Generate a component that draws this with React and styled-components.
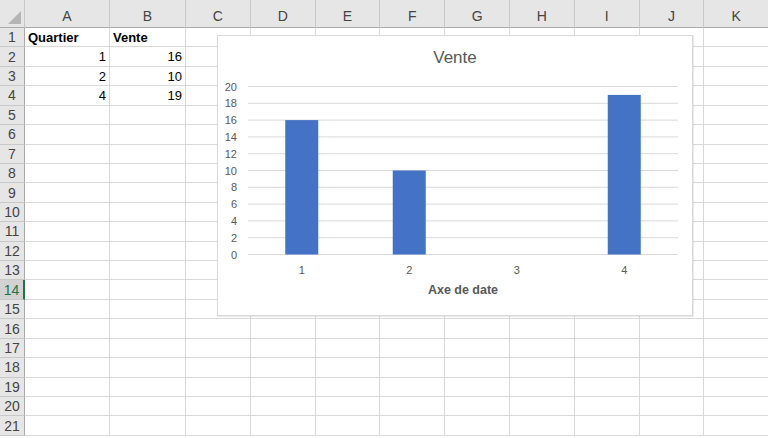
import React from 'react';
import styled, { createGlobalStyle } from 'styled-components';

const GlobalStyle = createGlobalStyle`
    html, body {
        margin: 0;
        padding: 0;
        background: #fff;
        overflow: hidden;
    }
    * { box-sizing: border-box; }
`;

const columns = ['A', 'B', 'C', 'D', 'E', 'F', 'G', 'H', 'I', 'J', 'K'];
const rows = Array.from({ length: 21 }, (_, i) => i + 1);
const cells = {
    '1A': { v: 'Quartier', bold: true },
    '1B': { v: 'Vente', bold: true },
    '2A': { v: 1 }, '2B': { v: 16 },
    '3A': { v: 2 }, '3B': { v: 10 },
    '4A': { v: 4 }, '4B': { v: 19 },
};
const sales = [16, 10, 0, 19];

const Sheet = styled.div`
    position: relative;
    width: 768px;
    height: 438px;
    overflow: hidden;
    display: grid;
    grid-template-columns: 25px 85px 76px repeat(9, 64.8px);
    grid-template-rows: 28px repeat(21, 19.43px);
    font-family: "Liberation Sans", Arial, sans-serif;
    background: #fff;
`;

const Corner = styled.div`
    position: relative;
    background: #e6e6e6;
    border-right: 1px solid #c8c8c8;
    border-bottom: 1px solid #ababab;
    &::after {
        content: '';
        position: absolute;
        right: 3px;
        bottom: 3px;
        border-left: 13px solid transparent;
        border-bottom: 13px solid #b5b5b5;
    }
`;

const ColHead = styled.div`
    display: flex;
    align-items: flex-end;
    justify-content: center;
    padding-bottom: 3px;
    background: #e6e6e6;
    border-right: 1px solid #c8c8c8;
    border-bottom: 1px solid #ababab;
    color: #444;
    font-size: 14px;
`;

const RowHead = styled.div`
    display: flex;
    align-items: center;
    justify-content: center;
    background: ${p => (p.$selected ? '#d2d2d2' : '#e6e6e6')};
    color: ${p => (p.$selected ? '#217346' : '#444')};
    border-bottom: 1px solid #c8c8c8;
    border-right: ${p => (p.$selected ? '2px solid #217346' : '1px solid #ababab')};
    font-size: 14px;
`;

const Cell = styled.div`
    display: flex;
    align-items: center;
    justify-content: ${p => (p.$right ? 'flex-end' : 'flex-start')};
    padding: 0 3px;
    border-right: 1px solid #d9d9d9;
    border-bottom: 1px solid #d9d9d9;
    color: #000;
    font-size: 13px;
    font-weight: ${p => (p.$bold ? 700 : 400)};
    white-space: nowrap;
`;

const Chart = styled.div`
    position: absolute;
    left: 217px;
    top: 35px;
    width: 476px;
    height: 281px;
    background: #fff;
    border: 1px solid #d9d9d9;
    box-shadow: 1px 1px 1px rgba(0, 0, 0, 0.08);
    display: flex;
    flex-direction: column;
    font-family: "Liberation Sans", Arial, sans-serif;
`;

const ChartTitle = styled.div`
    margin-top: 12px;
    height: 20px;
    line-height: 20px;
    text-align: center;
    font-size: 17px;
    color: #595959;
`;

const Plot = styled.svg`
    display: block;
    width: 474px;
    height: 212px;
`;

const AxisTitle = styled.div`
    margin-top: 2px;
    padding-left: 16px;
    height: 16px;
    line-height: 16px;
    text-align: center;
    font-size: 12.5px;
    font-weight: 700;
    color: #595959;
`;

const zeroY = 186.5;
const unit = 8.4;
const plotLeft = 30;
const plotRight = 460;
const band = (plotRight - plotLeft) / sales.length;

function ColumnChart() {
    const ticks = Array.from({ length: 11 }, (_, i) => i * 2);
    return (
        <Chart>
            <ChartTitle>Vente</ChartTitle>
            <Plot viewBox="0 0 474 212">
                {ticks.map(t => {
                    const y = zeroY - t * unit;
                    return (
                        <g key={t}>
                            <line x1={plotLeft} x2={plotRight} y1={y} y2={y} stroke="#d9d9d9" strokeWidth="1" />
                            <text x="19" y={y} textAnchor="end" dominantBaseline="central" fontSize="11" fill="#595959">{t}</text>
                        </g>
                    );
                })}
                {sales.map((v, i) => {
                    const cx = plotLeft + band * (i + 0.5);
                    return (
                        <g key={i}>
                            {v > 0 && <rect x={cx - 16.5} y={zeroY - v * unit} width="33" height={v * unit} fill="#4472c4" />}
                            <text x={cx} y="202" textAnchor="middle" dominantBaseline="central" fontSize="11" fill="#595959">{i + 1}</text>
                        </g>
                    );
                })}
            </Plot>
            <AxisTitle>Axe de date</AxisTitle>
        </Chart>
    );
}

export default function App() {
    return (
        <>
            <GlobalStyle />
            <Sheet>
                <Corner />
                {columns.map(c => <ColHead key={c}>{c}</ColHead>)}
                {rows.map(r => (
                    <React.Fragment key={r}>
                        <RowHead $selected={r === 14}>{r}</RowHead>
                        {columns.map(c => {
                            const cell = cells[`${r}${c}`];
                            return (
                                <Cell key={c} $bold={cell && cell.bold} $right={cell && typeof cell.v === 'number'}>
                                    {cell ? cell.v : ''}
                                </Cell>
                            );
                        })}
                    </React.Fragment>
                ))}
                <ColumnChart />
            </Sheet>
        </>
    );
}
